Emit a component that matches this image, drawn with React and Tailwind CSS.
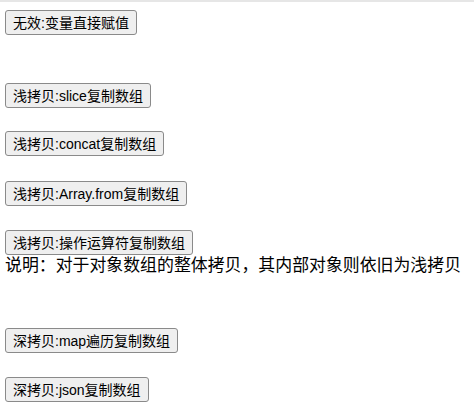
import React from "react";

const font = { fontFamily: '"Liberation Sans", "Noto Sans CJK SC", sans-serif' };

function Btn({ children, className = "" }) {
  return (
    <button
      className={`h-[25px] px-[7px] border border-[#8a8a8a] rounded-[3px] bg-[#efefef] text-[14px] leading-none text-black whitespace-nowrap ${className}`}
      style={font}
    >
      {children}
    </button>
  );
}

export default function App() {
  return (
    <div className="w-[474px] h-[412px] bg-white overflow-hidden" style={font}>
      <div className="h-[2px] bg-[#e6e6e6]" />
      <div className="flex flex-col items-start px-[5px] pt-[8px]">
        <Btn>无效:变量直接赋值</Btn>
        <Btn className="mt-[48px]">浅拷贝:slice复制数组</Btn>
        <Btn className="mt-[23px]">浅拷贝:concat复制数组</Btn>
        <Btn className="mt-[25px]">浅拷贝:Array.from复制数组</Btn>
        <Btn className="mt-[24px]">浅拷贝:操作运算符复制数组</Btn>
        <div className="text-[16.9px] leading-[22px] text-black whitespace-nowrap">
          说明：对于对象数组的整体拷贝，其内部对象则依旧为浅拷贝
        </div>
        <Btn className="mt-[51px]">深拷贝:map遍历复制数组</Btn>
        <Btn className="mt-[24px]">深拷贝:json复制数组</Btn>
      </div>
    </div>
  );
}
